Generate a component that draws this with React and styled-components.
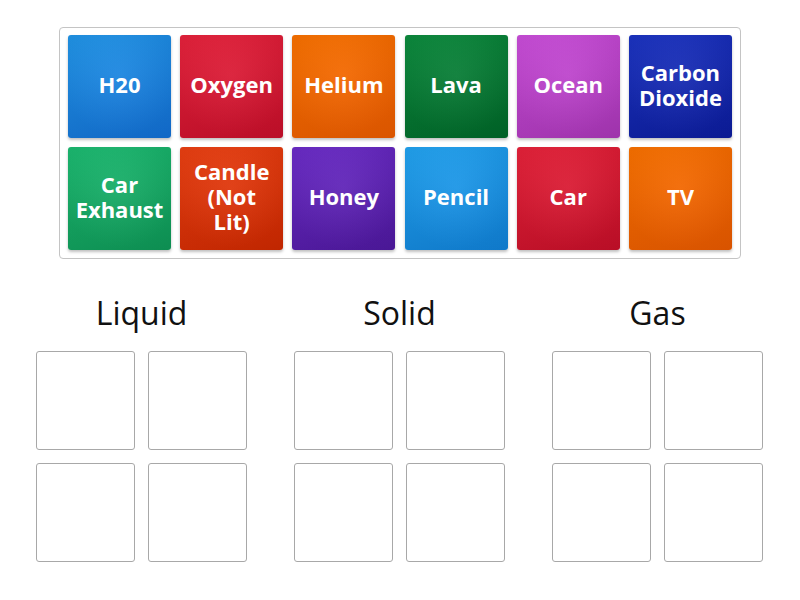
import React from "react";
import styled, { createGlobalStyle } from "styled-components";

const GlobalStyle = createGlobalStyle`
  body {
    margin: 0;
    background: #fff;
    font-family: "Open Sans", "Liberation Sans", sans-serif;
  }
`;

const Page = styled.div`
  width: 800px;
  height: 600px;
  padding-top: 27px;
  box-sizing: border-box;
`;

const Bank = styled.div`
  width: 682px;
  margin: 0 0 0 59px;
  box-sizing: border-box;
  border: 1px solid #c4c4c4;
  border-radius: 4px;
  padding: 7px 8px 8px 8px;
  display: grid;
  grid-template-columns: repeat(6, 103px);
  grid-auto-rows: 103px;
  column-gap: 9.2px;
  row-gap: 9px;
`;

const Tile = styled.div`
  display: flex;
  align-items: center;
  justify-content: center;
  text-align: center;
  white-space: pre-line;
  border-radius: 3px;
  color: #fff;
  font-weight: 700;
  font-size: 22px;
  line-height: 25px;
  padding: 0 4px 4px;
  background: radial-gradient(
      circle at 50% 40%,
      rgba(255, 255, 255, 0.06),
      rgba(0, 0, 0, 0.06) 75%
    ),
    linear-gradient(160deg, ${(p) => p.from}, ${(p) => p.to});
  box-shadow: 0 2px 3px rgba(0, 0, 0, 0.25);
`;

const Groups = styled.div`
  display: flex;
  gap: 47px;
  margin: 35px 0 0 36px;
`;

const Group = styled.div`
  width: 211px;
  display: flex;
  flex-direction: column;
  align-items: center;
`;

const GroupTitle = styled.div`
  font-size: 32px;
  line-height: 38px;
  color: #111;
  margin-bottom: 19px;
`;

const Slots = styled.div`
  display: grid;
  grid-template-columns: repeat(2, 99px);
  grid-auto-rows: 99px;
  gap: 13px;
`;

const Slot = styled.div`
  box-sizing: border-box;
  border: 1px solid #a8a8a8;
  border-radius: 3px;
  background: #fff;
`;

const tiles = [
  { label: "H20", from: "#2196ea", to: "#126ed2" },
  { label: "Oxygen", from: "#e8223c", to: "#c60f2a" },
  { label: "Helium", from: "#fb7200", to: "#e85a00" },
  { label: "Lava", from: "#0c8c3e", to: "#006628" },
  { label: "Ocean", from: "#cc4edc", to: "#a836b6" },
  { label: "Carbon\nDioxide", from: "#1c34c4", to: "#0c1c9c" },
  { label: "Car\nExhaust", from: "#1cbc72", to: "#0e9656" },
  { label: "Candle\n(Not\nLit)", from: "#ec4012", to: "#cc2800" },
  { label: "Honey", from: "#6c2cca", to: "#4e189e" },
  { label: "Pencil", from: "#22a4f2", to: "#1080d6" },
  { label: "Car", from: "#e8223a", to: "#c40f28" },
  { label: "TV", from: "#fb7200", to: "#e65800" },
];

const groups = ["Liquid", "Solid", "Gas"];

const App = () => {
  return (
    <Page>
      <GlobalStyle />
      <Bank>
        {tiles.map((t) => (
          <Tile key={t.label} from={t.from} to={t.to}>
            {t.label}
          </Tile>
        ))}
      </Bank>
      <Groups>
        {groups.map((g) => (
          <Group key={g}>
            <GroupTitle>{g}</GroupTitle>
            <Slots>
              <Slot />
              <Slot />
              <Slot />
              <Slot />
            </Slots>
          </Group>
        ))}
      </Groups>
    </Page>
  );
};

export default App;
